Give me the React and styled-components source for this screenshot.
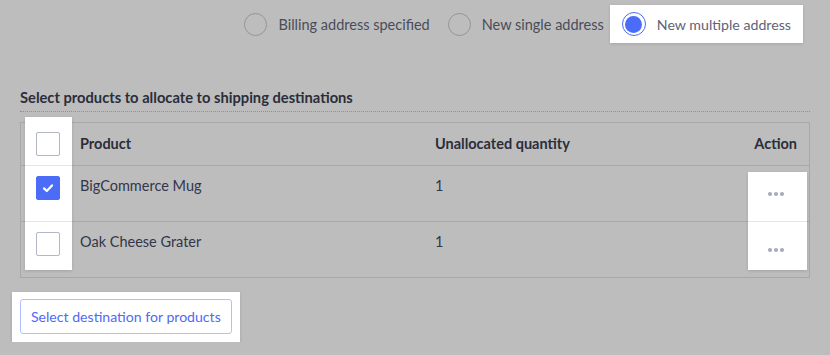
import React from "react";
import styled, { createGlobalStyle } from "styled-components";

const Global = createGlobalStyle`
  * { box-sizing: border-box; }
  body {
    margin: 0;
    background: #bdbdbd;
    font-family: "Lato", "Open Sans", sans-serif;
    font-size: 14.5px;
    color: #2f3140;
  }
`;

const Page = styled.div`
  padding: 5px 20px 0 20px;
`;

const RadioGroup = styled.div`
  display: flex;
  justify-content: flex-end;
  align-items: center;
  gap: 18px;
  padding-right: 7px;
  height: 38px;
`;

const RadioItem = styled.label`
  display: flex;
  align-items: center;
  gap: 11px;
  height: 38px;
  color: ${(p) => (p.$active ? "#5e637a" : "#4a4c58")};
  background: ${(p) => (p.$active ? "#ffffff" : "transparent")};
  padding: ${(p) => (p.$active ? "0 12px" : "0")};
  margin-left: ${(p) => (p.$active ? "-12px" : "0")};
  box-shadow: ${(p) => (p.$active ? "0 1px 3px rgba(0,0,0,0.12)" : "none")};
`;

const RadioLabel = styled.span`
  font-size: ${(p) => (p.$active ? 14.2 : 14.5)}px;
`;

const RadioCircle = styled.span`
  position: relative;
  display: inline-block;
  width: ${(p) => (p.$checked ? 24 : 23)}px;
  height: ${(p) => (p.$checked ? 24 : 23)}px;
  border-radius: 50%;
  border: ${(p) => (p.$checked ? "1.5px solid #4a6cf7" : "1px solid #959595")};
  background: ${(p) => (p.$checked ? "#ffffff" : "transparent")};
  &::after {
    content: "";
    display: ${(p) => (p.$checked ? "block" : "none")};
    position: absolute;
    inset: 2.5px;
    border-radius: 50%;
    background: #4a6cf7;
  }
`;

const SectionTitle = styled.h2`
  margin: 44px 0 0 0;
  font-size: 14.7px;
  font-weight: 700;
  line-height: 20px;
  color: #2b2d3a;
  padding-bottom: 4px;
  border-bottom: 1px dotted #8f8f8f;
`;

const TableWrap = styled.div`
  position: relative;
  margin-top: 10px;
  border: 1px solid rgba(0, 0, 0, 0.11);
`;

const Spotlight = styled.div`
  position: absolute;
  z-index: 0;
  background: #ffffff;
  box-shadow: 0 1px 3px rgba(0, 0, 0, 0.14);
`;

const Row = styled.div`
  position: relative;
  z-index: 1;
  display: grid;
  grid-template-columns: 59px 355px 1fr auto;
  height: ${(p) => (p.$head ? 42 : 56)}px;
  border-top: ${(p) => (p.$head ? "none" : "1px solid rgba(0,0,0,0.1)")};
  align-items: ${(p) => (p.$head ? "center" : "start")};
`;

const Cell = styled.div`
  display: flex;
  align-items: center;
  justify-content: ${(p) => (p.$right ? "flex-end" : "flex-start")};
  padding-top: ${(p) => (p.$head ? 0 : 10)}px;
  padding-left: ${(p) => p.$pl || 0}px;
  padding-right: ${(p) => p.$pr || 0}px;
  min-height: 20px;
  line-height: 20px;
  font-weight: ${(p) => (p.$head ? 700 : 400)};
  color: ${(p) => (p.$head ? "#2b2d3a" : "#33364a")};
`;

const Checkbox = styled.span`
  display: inline-flex;
  align-items: center;
  justify-content: center;
  width: 24px;
  height: 24px;
  border-radius: 2px;
  border: 1px solid ${(p) => (p.$checked ? "#4a6cf7" : "#b3b6c4")};
  background: ${(p) => (p.$checked ? "#4a6cf7" : "#ffffff")};
`;

const IconButton = styled.button`
  display: flex;
  align-items: center;
  justify-content: center;
  width: 36px;
  height: 36px;
  padding: 0;
  border: none;
  background: transparent;
`;

const Dots = styled.span`
  display: flex;
  gap: 2px;
  span {
    width: 4px;
    height: 4px;
    border-radius: 50%;
    background: #a3a8ba;
  }
`;

const ButtonSpot = styled.div`
  display: inline-flex;
  margin: 14px 0 0 -8px;
  padding: 7px 8px 8px 8px;
  background: #ffffff;
  box-shadow: 0 1px 3px rgba(0, 0, 0, 0.14);
`;

const Button = styled.button`
  height: 35px;
  padding: 0 10px;
  border: 1px solid #b3c0ff;
  border-radius: 3px;
  background: #ffffff;
  color: #4f6af3;
  font-family: "Lato", "Open Sans", sans-serif;
  font-size: 14.1px;
`;

const Check = () => (
  <svg width="14" height="14" viewBox="0 0 14 14">
    <path d="M3 7.4 L5.8 10 L11 4.4" fill="none" stroke="#ffffff" strokeWidth="2.2" strokeLinecap="round" strokeLinejoin="round" />
  </svg>
);

const products = [
  { name: "BigCommerce Mug", qty: 1, checked: true },
  { name: "Oak Cheese Grater", qty: 1, checked: false },
];

export default function App() {
  return (
    <>
      <Global />
      <Page>
        <RadioGroup>
          <RadioItem>
            <RadioCircle />
            <RadioLabel>Billing address specified</RadioLabel>
          </RadioItem>
          <RadioItem>
            <RadioCircle />
            <RadioLabel>New single address</RadioLabel>
          </RadioItem>
          <RadioItem $active>
            <RadioCircle $checked />
            <RadioLabel $active>New multiple address</RadioLabel>
          </RadioItem>
        </RadioGroup>

        <SectionTitle>Select products to allocate to shipping destinations</SectionTitle>

        <TableWrap>
          <Spotlight style={{ left: 4, top: -6, width: 47, height: 153 }} />
          <Spotlight style={{ left: 727, top: 49, width: 59, height: 98 }} />
          <Row $head>
            <Cell $head $pl={15}>
              <Checkbox />
            </Cell>
            <Cell $head>Product</Cell>
            <Cell $head>Unallocated quantity</Cell>
            <Cell $head $right $pr={12}>Action</Cell>
          </Row>
          {products.map((p) => (
            <Row key={p.name}>
              <Cell $pl={15}>
                <Checkbox $checked={p.checked}>{p.checked && <Check />}</Checkbox>
              </Cell>
              <Cell>{p.name}</Cell>
              <Cell>{p.qty}</Cell>
              <Cell $right $pr={15}>
                <IconButton aria-label="Actions">
                  <Dots>
                    <span />
                    <span />
                    <span />
                  </Dots>
                </IconButton>
              </Cell>
            </Row>
          ))}
        </TableWrap>

        <ButtonSpot>
          <Button>Select destination for products</Button>
        </ButtonSpot>
      </Page>
    </>
  );
}
